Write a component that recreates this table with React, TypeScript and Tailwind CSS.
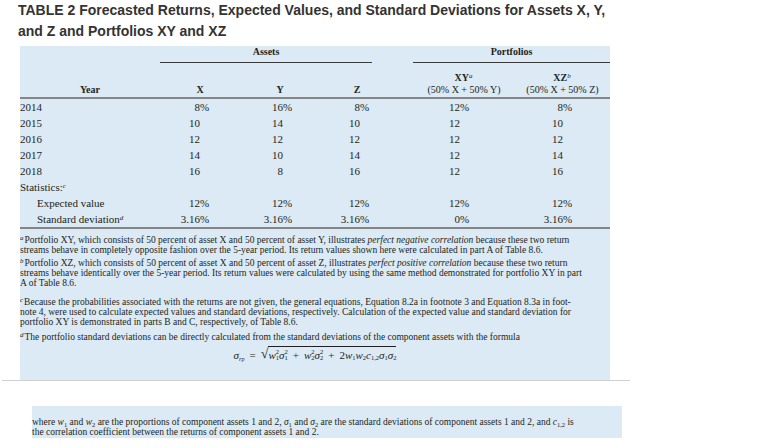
const serif = "font-['Liberation_Serif','Times_New_Roman',serif]";

type Row = { year: string; vals: string[]; pct?: boolean };

const rows: Row[] = [
  { year: '2014', vals: ['8', '16', '8', '12', '8'], pct: true },
  { year: '2015', vals: ['10', '14', '10', '12', '10'] },
  { year: '2016', vals: ['12', '12', '12', '12', '12'] },
  { year: '2017', vals: ['14', '10', '14', '12', '14'] },
  { year: '2018', vals: ['16', '8', '16', '12', '16'] },
];

// width of the right-aligned number box in each value column
const numW = ['w-[40px]', 'w-[43px]', 'w-[40px]', 'w-[47px]', 'w-[48px]'];

function Num({ col, v, pct }: { col: number; v: string; pct?: boolean }) {
  return (
    <div className="flex">
      <span className={`${numW[col]} text-right`}>{v}</span>
      <span>{pct ? '%' : ''}</span>
    </div>
  );
}

function ValueRow({ label, vals, pct, indent }: { label: React.ReactNode; vals: string[]; pct?: boolean; indent?: boolean }) {
  return (
    <div className="grid grid-cols-[140px_80px_80px_74px_19px_102px_95px] h-[16px] leading-[16px]">
      <div className={indent ? 'pl-[17px]' : ''}>{label}</div>
      <Num col={0} v={vals[0]} pct={pct} />
      <Num col={1} v={vals[1]} pct={pct} />
      <Num col={2} v={vals[2]} pct={pct} />
      <div />
      <Num col={3} v={vals[3]} pct={pct} />
      <Num col={4} v={vals[4]} pct={pct} />
    </div>
  );
}

function Sup({ c }: { c: string }) {
  return <sup className="italic font-normal text-[7px] mr-[1px]">{c}</sup>;
}

function SubSup({ sup, sub }: { sup?: string; sub: string }) {
  return (
    <span className="inline-flex flex-col text-[6.5px] leading-[6px] not-italic">
      <span className="h-[6px]">{sup ?? ''}</span>
      <span>{sub}</span>
    </span>
  );
}

export default function App() {
  return (
    <div className="w-[761px] h-[448px] bg-white overflow-hidden">
      <div className="pl-[18px] font-['Liberation_Sans',Arial,sans-serif] font-bold text-[14px] leading-[21px] text-[#333333] whitespace-nowrap">
        TABLE 2 Forecasted Returns, Expected Values, and Standard Deviations for Assets X, Y,
        <br />
        and Z and Portfolios XY and XZ
      </div>

      <div className={`ml-[20px] mt-[4px] w-[590px] h-[334px] bg-[#dbeaf4] text-[#231f20] ${serif} text-[11px]`}>
        {/* spanner headings */}
        <div className="grid grid-cols-[140px_80px_80px_74px_19px_102px_95px] h-[18px]">
          <div />
          <div className="col-span-3 mr-[22px] h-[17px] border-b border-[#3a3a3a] text-center font-bold text-[10px] leading-[12px]">
            Assets
          </div>
          <div />
          <div className="col-span-2 h-[17px] border-b border-[#3a3a3a] text-center font-bold text-[10px] leading-[12px]">
            Portfolios
          </div>
        </div>

        {/* column headings */}
        <div className="grid grid-cols-[140px_80px_80px_74px_19px_102px_95px] h-[35px] items-end pb-[1px] border-b-2 border-[#858585] leading-[12px] text-[10px]">
          <div className="text-center font-bold">Year</div>
          <div className="text-center font-bold">X</div>
          <div className="text-center font-bold">Y</div>
          <div className="text-center font-bold">Z</div>
          <div />
          <div className="text-center">
            <div className="font-bold">
              XY<Sup c="a" />
            </div>
            <div className="whitespace-nowrap">(50% X + 50% Y)</div>
          </div>
          <div className="text-center">
            <div className="font-bold">
              XZ<Sup c="b" />
            </div>
            <div className="whitespace-nowrap">(50% X + 50% Z)</div>
          </div>
        </div>

        {rows.map((r) => (
          <ValueRow key={r.year} label={r.year} vals={r.vals} pct={r.pct} />
        ))}
        <div className="h-[16px] leading-[16px]">
          Statistics:<Sup c="c" />
        </div>
        <ValueRow label="Expected value" vals={['12', '12', '12', '12', '12']} pct indent />
        <ValueRow
          label={
            <>
              Standard deviation<Sup c="d" />
            </>
          }
          vals={['3.16', '3.16', '3.16', '0', '3.16']}
          pct
          indent
        />

        <div className="border-t-2 border-[#858585] pt-[6px] text-[9.5px] leading-[10px] whitespace-nowrap">
          <p>
            <Sup c="a" />
            Portfolio XY, which consists of 50 percent of asset X and 50 percent of asset Y, illustrates{' '}
            <i>perfect negative correlation</i> because these two return
            <br />
            streams behave in completely opposite fashion over the 5-year period. Its return values shown here were
            calculated in part A of Table 8.6.
          </p>
          <p className="mt-[3px]">
            <Sup c="b" />
            Portfolio XZ, which consists of 50 percent of asset X and 50 percent of asset Z, illustrates{' '}
            <i>perfect positive correlation</i> because these two return
            <br />
            streams behave identically over the 5-year period. Its return values were calculated by using the same
            method demonstrated for portfolio XY in part
            <br />A of Table 8.6.
          </p>
          <p className="mt-[9px]">
            <Sup c="c" />
            Because the probabilities associated with the returns are not given, the general equations, Equation 8.2a
            in footnote 3 and Equation 8.3a in foot-
            <br />
            note 4, were used to calculate expected values and standard deviations, respectively. Calculation of the
            expected value and standard deviation for
            <br />
            portfolio XY is demonstrated in parts B and C, respectively, of Table 8.6.
          </p>
          <p className="mt-[5px]">
            <Sup c="d" />
            The portfolio standard deviations can be directly calculated from the standard deviations of the component
            assets with the formula
          </p>
          <div className="mt-[4px] flex justify-center text-[11px] leading-[12px] italic">
            <span className="flex items-end">
              σ
              <span className="text-[7px] leading-[8px] -mb-[2px]">
                r<span className="text-[5.5px]">p</span>
              </span>
              <span className="not-italic mx-[5px]">=</span>
              <span className="not-italic text-[14px] leading-[15px]">√</span>
              <span className="border-t border-[#231f20] pt-[2px] flex items-center leading-[12px]">
                w<SubSup sup="2" sub="1" />σ<SubSup sup="2" sub="1" />
                <span className="not-italic mx-[5px]">+</span>
                w<SubSup sup="2" sub="2" />σ<SubSup sup="2" sub="2" />
                <span className="not-italic mx-[5px]">+</span>
                <span className="not-italic">2</span>w<SubSup sub="1" />w<SubSup sub="2" />c<SubSup sub="1,2" />σ
                <SubSup sub="1" />σ<SubSup sub="2" />
              </span>
            </span>
          </div>
        </div>
      </div>

      <div className="ml-[2px] w-[628px] h-px bg-[#d0d0d0]" />

      <div
        className={`ml-[32px] mt-[25px] w-[590px] h-[32px] pt-[11px] bg-[#dbeaf4] text-[#231f20] ${serif} text-[9.5px] leading-[10px] whitespace-nowrap`}
      >
        where <i>w</i>
        <sub className="text-[6.5px]">1</sub> and <i>w</i>
        <sub className="text-[6.5px]">2</sub> are the proportions of component assets 1 and 2, <i>σ</i>
        <sub className="text-[6.5px]">1</sub> and <i>σ</i>
        <sub className="text-[6.5px]">2</sub> are the standard deviations of component assets 1 and 2, and <i>c</i>
        <sub className="text-[6.5px]">1,2</sub> is
        <br />
        the correlation coefficient between the returns of component assets 1 and 2.
      </div>
    </div>
  );
}
